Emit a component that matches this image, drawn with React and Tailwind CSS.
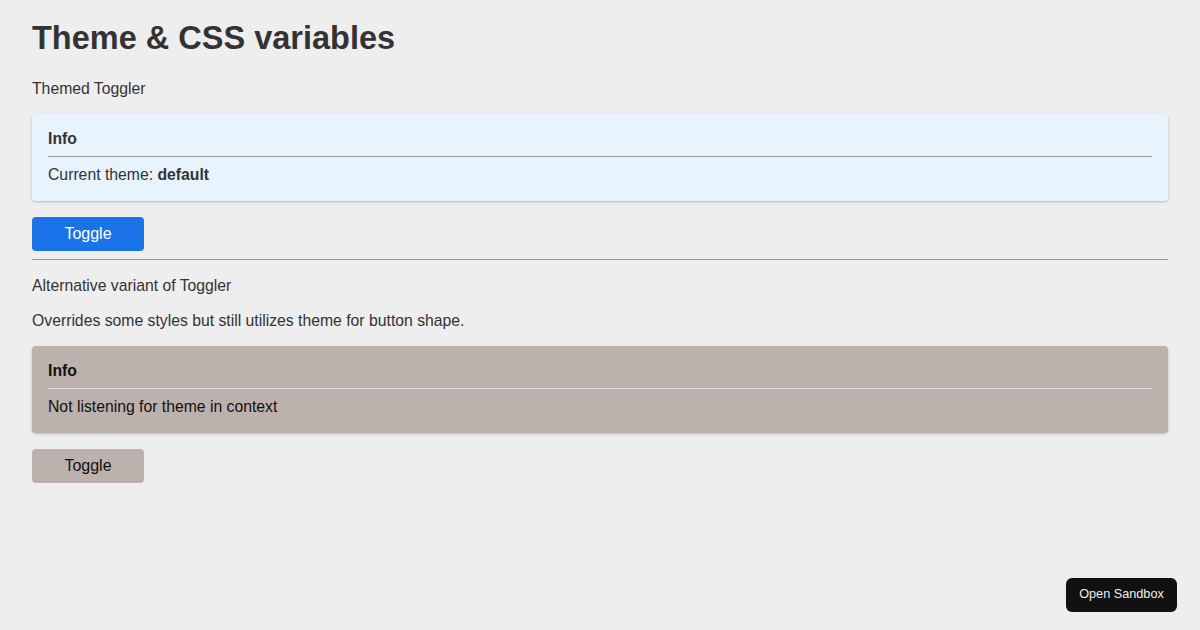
export default function App() {
  return (
    <div className="min-h-screen bg-[#eeeeee] px-8 pt-5 pb-8 font-['Liberation_Sans',Arial,sans-serif] text-[15.75px] text-[#333333]">
      <h1 className="text-[32.5px] font-bold leading-[37px] mb-[22px]">Theme &amp; CSS variables</h1>

      <p className="leading-5 mb-[15px]">Themed Toggler</p>

      <div className="rounded bg-[#e7f3fd] p-4 shadow-[0_1px_3px_rgba(0,0,0,0.22)]">
        <p className="font-bold leading-[18px]">Info</p>
        <hr className="my-2 border-0 border-t border-[#999999]" />
        <p className="leading-5">
          Current theme: <b>default</b>
        </p>
      </div>

      <button className="mt-4 h-[34px] w-[112px] rounded bg-[#1a73e8] text-base text-white">
        Toggle
      </button>

      <hr className="mt-2 border-0 border-t border-[#999999]" />

      <p className="mt-4 mb-[15px] leading-5">Alternative variant of Toggler</p>
      <p className="mb-[15px] leading-5">Overrides some styles but still utilizes theme for button shape.</p>

      <div className="rounded bg-[#bdb1ae] p-4 text-[#111111] shadow-[0_1px_3px_rgba(0,0,0,0.22)]">
        <p className="font-bold leading-[18px]">Info</p>
        <hr className="my-2 border-0 border-t border-[#dcdcdc]" />
        <p className="leading-5">Not listening for theme in context</p>
      </div>

      <button className="mt-4 h-[34px] w-[112px] rounded bg-[#bdb1ae] text-base text-[#111111]">
        Toggle
      </button>

      <button className="fixed right-[23px] bottom-[18px] h-[34px] w-[111px] rounded-md bg-[#111111] text-[12.7px] text-[#f0f0f0]">
        Open Sandbox
      </button>
    </div>
  );
}
